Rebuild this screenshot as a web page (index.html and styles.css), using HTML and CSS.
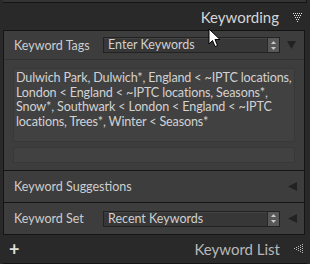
FILE: index.html
```html
<!DOCTYPE html>
<html lang="en">
<head>
    <meta charset="UTF-8">
    <title>Keywording</title>
    <link rel="stylesheet" href="styles.css">
</head>
<body>
    <div class="app">
        <div class="prev-panel"></div>

        <!-- Keywording header -->
        <div class="panel-header">
            <span class="header-title">Keywording</span>
            <svg class="dots-down" width="10" height="9" viewBox="0 0 10 9">
                <g fill="#e6e6e6">
                    <rect x="0" y="0" width="1" height="1"/><rect x="2" y="0" width="1" height="1"/><rect x="4" y="0" width="1" height="1"/><rect x="6" y="0" width="1" height="1"/><rect x="8" y="0" width="1" height="1"/>
                    <rect x="1" y="2" width="1" height="1"/><rect x="3" y="2" width="1" height="1"/><rect x="5" y="2" width="1" height="1"/><rect x="7" y="2" width="1" height="1"/>
                    <rect x="2" y="4" width="1" height="1"/><rect x="4" y="4" width="1" height="1"/><rect x="6" y="4" width="1" height="1"/>
                    <rect x="3" y="6" width="1" height="1"/><rect x="5" y="6" width="1" height="1"/>
                    <rect x="4" y="8" width="1" height="1"/>
                </g>
            </svg>
        </div>

        <div class="panel">
            <!-- Keyword Tags -->
            <div class="tags-section">
                <div class="row">
                    <span class="label">Keyword Tags</span>
                    <div class="select">
                        <span class="select-text">Enter Keywords</span>
                        <span class="select-arrows">
                            <svg width="7" height="11" viewBox="0 0 7 11"><path d="M3.5 1 L6 4 H1 Z M3.5 10 L6 7 H1 Z" fill="#c8c8c8"/></svg>
                        </span>
                    </div>
                    <svg class="tri" width="10" height="8" viewBox="0 0 10 8"><path d="M0 0 H9 L4.5 8 Z" fill="#222"/></svg>
                </div>
                <div class="tags-body">
                    <div class="keyword-box">Dulwich Park, Dulwich*, England &lt; ~IPTC locations, London &lt; England &lt; ~IPTC locations, Seasons*, Snow*, Southwark &lt; London &lt; England &lt; ~IPTC locations, Trees*, Winter &lt; Seasons*</div>
                    <div class="keyword-input"></div>
                </div>
            </div>

            <!-- Keyword Suggestions -->
            <div class="row section">
                <span class="label">Keyword Suggestions</span>
                <svg class="tri-left" width="9" height="9" viewBox="0 0 9 9"><path d="M9 0 V9 L0 4.5 Z" fill="#222"/></svg>
            </div>

            <!-- Keyword Set -->
            <div class="row section">
                <span class="label">Keyword Set</span>
                <div class="select">
                    <span class="select-text">Recent Keywords</span>
                    <span class="select-arrows">
                        <svg width="7" height="11" viewBox="0 0 7 11"><path d="M3.5 1 L6 4 H1 Z M3.5 10 L6 7 H1 Z" fill="#c8c8c8"/></svg>
                    </span>
                </div>
                <svg class="tri-left" width="9" height="9" viewBox="0 0 9 9"><path d="M9 0 V9 L0 4.5 Z" fill="#222"/></svg>
            </div>
        </div>

        <!-- Keyword List header -->
        <div class="panel-header list-header">
            <span class="plus">+</span>
            <span class="header-title">Keyword List</span>
            <svg class="dots-left" width="9" height="10" viewBox="0 0 9 10">
                <g fill="#bdbdbd">
                    <rect x="8" y="0" width="1" height="1"/><rect x="8" y="2" width="1" height="1"/><rect x="8" y="4" width="1" height="1"/><rect x="8" y="6" width="1" height="1"/><rect x="8" y="8" width="1" height="1"/>
                    <rect x="6" y="1" width="1" height="1"/><rect x="6" y="3" width="1" height="1"/><rect x="6" y="5" width="1" height="1"/><rect x="6" y="7" width="1" height="1"/>
                    <rect x="4" y="2" width="1" height="1"/><rect x="4" y="4" width="1" height="1"/><rect x="4" y="6" width="1" height="1"/>
                    <rect x="2" y="3" width="1" height="1"/><rect x="2" y="5" width="1" height="1"/>
                    <rect x="0" y="4" width="1" height="1"/>
                </g>
            </svg>
        </div>
        <div class="next-panel"></div>

        <!-- mouse pointer -->
        <svg class="cursor" width="14" height="20" viewBox="0 0 14 20">
            <path d="M1 1 V16 L4.5 12.5 L7 18.5 L9.5 17.5 L7 11.5 H12 Z" fill="#fff" stroke="#000" stroke-width="1"/>
        </svg>
    </div>
</body>
</html>
```

FILE: styles.css
```css
* {
    margin: 0;
    padding: 0;
    box-sizing: border-box;
}

:root {
    --bg-dark: #292929;
    --panel-bg: #3d3d3d;
    --line: #141414;
    --text: #cdcdcd;
    --title: #d6d6d6;
}

body {
    background-color: var(--bg-dark);
    font-family: Lato, "DejaVu Sans", sans-serif;
    color: var(--text);
}

.app {
    position: relative;
    width: 310px;
    height: 264px;
    overflow: hidden;
}

.prev-panel {
    height: 3px;
    margin-left: 3px;
    width: 304px;
    background-color: #343434;
    border-bottom: 1px solid var(--line);
    border-right: 1px solid var(--line);
}

/* Header Styles */
.panel-header {
    height: 27px;
    display: flex;
    align-items: center;
    justify-content: flex-end;
    padding-right: 7px;
}

.header-title {
    font-size: 15px;
    color: var(--title);
    margin-right: 14px;
}

.dots-down {
    margin-top: 1px;
}

/* Panel */
.panel {
    margin-left: 3px;
    width: 302px;
    background-color: var(--panel-bg);
    border: 1px solid var(--line);
    border-bottom: none;
}

.row {
    display: flex;
    align-items: center;
    height: 29px;
    padding-left: 10px;
    font-size: 12.5px;
}

.label {
    width: 89px;
    flex-shrink: 0;
    white-space: nowrap;
}

.select {
    display: flex;
    align-items: stretch;
    width: 177px;
    height: 16px;
    background-color: #373737;
    border: 1px solid #222;
    box-shadow: inset 0 1px 0 #444;
}

.select-text {
    flex: 1;
    padding-left: 4px;
    line-height: 14px;
    font-size: 12.5px;
    color: #d0d0d0;
}

.select-arrows {
    width: 12px;
    display: flex;
    align-items: center;
    justify-content: center;
    background-color: #585858;
    border-left: 1px solid #2a2a2a;
}

.tri {
    margin-left: 7px;
}

.tri-left {
    margin-left: auto;
    margin-right: 7px;
}

.tags-section {
    border-bottom: 1px solid var(--line);
}

.tags-section .row {
    border-bottom: 1px solid #323232;
}

.tags-body {
    padding: 8px 9px 7px 9px;
}

.keyword-box {
    height: 74px;
    padding: 2px 0 0 2px;
    background-color: #414141;
    border: 1px solid #383838;
    font-size: 12.6px;
    letter-spacing: -0.15px;
    line-height: 14.6px;
    color: #d2d2d2;
}

.keyword-input {
    height: 16px;
    margin-top: 5px;
    background-color: #414141;
    border: 1px solid #383838;
}

.section {
    height: 32px;
    border-bottom: 1px solid var(--line);
}

/* Keyword List header */
.list-header {
    height: 28px;
    padding-left: 9px;
}

.plus {
    font-size: 18px;
    font-weight: 700;
    color: #e0e0e0;
    margin-right: auto;
    line-height: 1;
}

.list-header .header-title {
    color: #b8b8b8;
}

.next-panel {
    margin-left: 3px;
    width: 304px;
    height: 3px;
    border-top: 1px solid var(--line);
    border-left: 1px solid var(--line);
    border-right: 1px solid var(--line);
}

.cursor {
    position: absolute;
    left: 208px;
    top: 28px;
}
```
